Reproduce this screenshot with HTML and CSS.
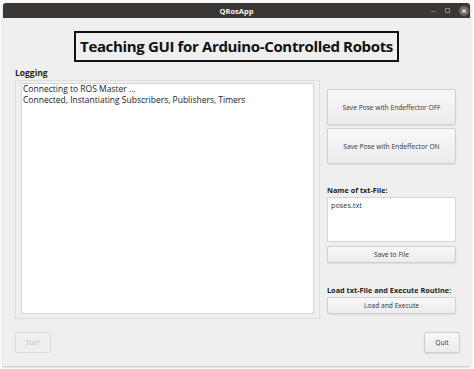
FILE: index.html
```html
<!DOCTYPE html>
<html>
<head>
<meta charset="utf-8">
<link rel="stylesheet" href="styles.css">
</head>
<body>
<div class="window">
  <div class="titlebar">
    <span class="wtitle">QRosApp</span>
    <div class="controls">
      <span class="ctl-min"></span>
      <span class="ctl-max"></span>
      <span class="ctl-close"><svg width="10" height="10" viewBox="0 0 10 10"><circle cx="5" cy="5" r="5" fill="#6e6b68"/><path d="M3.3 3.3 L6.7 6.7 M6.7 3.3 L3.3 6.7" stroke="#f0f0f0" stroke-width="1.1"/></svg></span>
    </div>
  </div>
  <div class="content">
    <div class="heading-row"><h1 class="heading">Teaching GUI for Arduino-Controlled Robots</h1></div>
    <div class="main">
      <div class="left">
        <div class="label">Logging</div>
        <div class="frame">
          <div class="log">Connecting to ROS Master ...<br>Connected, Instantiating Subscribers, Publishers, Timers</div>
        </div>
      </div>
      <div class="right">
        <button class="btn big">Save Pose with Endeffector OFF</button>
        <button class="btn big second">Save Pose with Endeffector ON</button>
        <div class="label sub">Name of txt-File:</div>
        <div class="textbox">poses.txt</div>
        <button class="btn small">Save to File</button>
        <div class="label sub2">Load txt-File and Execute Routine:</div>
        <button class="btn small">Load and Execute</button>
      </div>
    </div>
    <div class="bottom">
      <button class="btn foot disabled">Start</button>
      <button class="btn foot">Quit</button>
    </div>
  </div>
</div>
</body>
</html>
```
FILE: styles.css
```css
html, body {
  margin: 0;
  padding: 0;
  background: #fafafa;
}
body {
  width: 474px;
  height: 369px;
  overflow: hidden;
  font-family: "Open Sans", "DejaVu Sans", sans-serif;
  color: #333;
}
*, *::before, *::after { box-sizing: border-box; }
.window {
  margin: 3px 0 0 3px;
  width: 467px;
  height: 363px;
  background: #efefef;
  box-shadow: 0 1px 2px rgba(0,0,0,0.25);
  display: flex;
  flex-direction: column;
}
.titlebar {
  height: 15px;
  flex: none;
  background: #3a3734;
  display: flex;
  align-items: center;
  justify-content: center;
  position: relative;
  border-radius: 3px 3px 0 0;
}
.wtitle {
  color: #f2f2f2;
  font-size: 7.5px;
  font-weight: 700;
}
.controls {
  position: absolute;
  right: 1px;
  top: 2px;
  display: flex;
  align-items: center;
  gap: 9px;
  height: 11px;
}
.ctl-min {
  width: 5px;
  height: 1px;
  background: #7a7774;
  margin-top: 2px;
}
.ctl-max {
  width: 5px;
  height: 5px;
  border: 1px solid #8a8784;
}
.ctl-close { display: flex; }
.content {
  flex: 1;
  padding: 13px 14px 0 12px;
  display: flex;
  flex-direction: column;
}
.heading-row {
  display: flex;
  justify-content: center;
  padding-left: 2px;
}
.heading {
  margin: 0;
  height: 31px;
  border: 2px solid #111;
  padding: 0 4px;
  font-size: 15px;
  letter-spacing: -0.35px;
  font-weight: 700;
  line-height: 27px;
  color: #111;
  white-space: nowrap;
}
.main {
  display: flex;
  gap: 7px;
  margin-top: 4px;
}
.left {
  width: 305px;
  display: flex;
  flex-direction: column;
}
.label {
  font-size: 8.5px;
  font-weight: 700;
  color: #1e1e1e;
  height: 14px;
  line-height: 14px;
  white-space: nowrap;
}
.frame {
  height: 239px;
  border: 1px solid #dedede;
  padding: 2px 5px 4px 5px;
}
.log {
  height: 100%;
  background: #fff;
  border: 1px solid #d6d6d6;
  padding: 0 1px;
  font-size: 8.5px;
  line-height: 10.5px;
  color: #222;
  white-space: nowrap;
}
.right {
  width: 129px;
  display: flex;
  flex-direction: column;
  padding-top: 23px;
}
.btn {
  font-family: "Open Sans", "DejaVu Sans", sans-serif;
  font-size: 6.7px;
  color: #333;
  background: linear-gradient(#f8f8f8, #ececec);
  border: 1px solid #cfcfcf;
  border-radius: 2px;
  box-shadow: 0 1px 1px rgba(0,0,0,0.08);
  padding: 0;
  margin: 0;
  white-space: nowrap;
}
.btn.big { height: 36px; }
.btn.second { margin-top: 3px; }
.label.sub {
  margin-top: 19px;
  font-size: 7.3px;
}
.textbox {
  height: 45px;
  background: #fff;
  border: 1px solid #d6d6d6;
  padding: 2px 3px;
  font-size: 7.3px;
  color: #333;
}
.btn.small {
  height: 17px;
  margin-top: 4px;
}
.label.sub2 {
  margin-top: 20px;
  font-size: 7.3px;
  height: 14px;
}
.label.sub2 + .btn.small { margin-top: 0; }
.bottom {
  display: flex;
  justify-content: space-between;
  margin-top: 13px;
  margin-right: -4px;
}
.btn.foot {
  width: 36px;
  height: 21px;
}
.btn.disabled {
  color: #c4c4c4;
  background: #efefef;
  border-color: #dadada;
  box-shadow: none;
}
```
